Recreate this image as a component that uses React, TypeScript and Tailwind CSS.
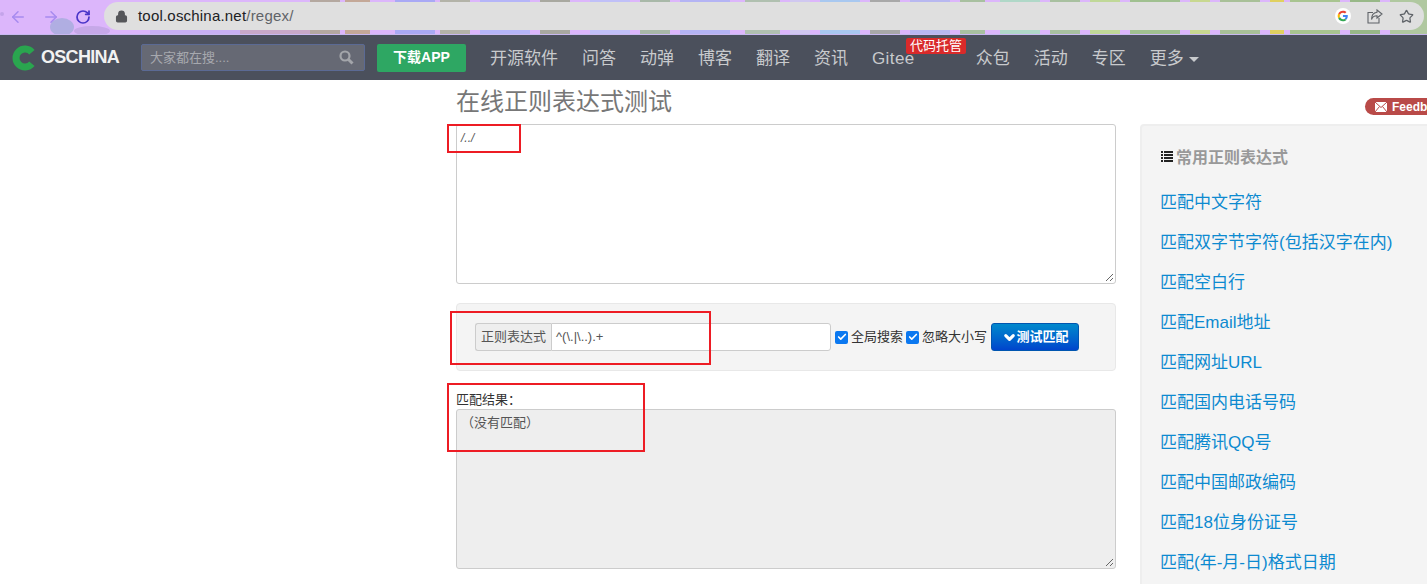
import { ChevronDown, Check, ArrowLeft, ArrowRight, RotateCw, Lock, Star } from "lucide-react";

const font = "font-['Liberation_Sans','Noto_Sans_CJK_SC',sans-serif]";

const navItems = ["开源软件", "问答", "动弹", "博客", "翻译", "资讯"];
const navItems2 = ["众包", "活动", "专区"];
const links = [
  "匹配中文字符",
  "匹配双字节字符(包括汉字在内)",
  "匹配空白行",
  "匹配Email地址",
  "匹配网址URL",
  "匹配国内电话号码",
  "匹配腾讯QQ号",
  "匹配中国邮政编码",
  "匹配18位身份证号",
  "匹配(年-月-日)格式日期",
];

const patches: [number, number, string][] = [
  [310, 30, "#b4a8a0"], [345, 25, "#c4a898"], [395, 40, "#a9a9f5"], [440, 30, "#b3b3a8"], [480, 50, "#b5b5f8"],
  [540, 30, "#a8a8a0"], [590, 40, "#c0c0f8"], [640, 30, "#a8b8a8"], [680, 50, "#b4b4f4"], [745, 35, "#b0c0b0"],
  [790, 20, "#d0c8f0"], [820, 40, "#a8c8f0"], [870, 30, "#a8a8a8"], [910, 40, "#b8b8f0"], [960, 25, "#a8c0a0"],
  [1000, 40, "#b0d8c8"], [1050, 30, "#a8c0a0"], [1090, 30, "#c0d898"], [1130, 50, "#a0c090"], [1190, 20, "#c8d890"],
  [1220, 40, "#a8c098"], [1270, 14, "#e0d060"], [1290, 50, "#a8c490"], [1350, 30, "#98b888"], [1390, 37, "#b0c8a0"],
];

function Wallpaper() {
  return (
    <svg className="absolute inset-0 w-full h-full" viewBox="0 0 1427 34" preserveAspectRatio="none">
      <rect width="1427" height="34" fill="#dcb6fb" />
      <ellipse cx="62" cy="27" rx="12" ry="9" fill="#b0aee2" />
      <ellipse cx="92" cy="31" rx="18" ry="5" fill="#c6a8e8" />
      <circle cx="2" cy="14" r="2" fill="#c4a4ea" />
      <rect x="150" y="30" width="90" height="4" fill="#c8b0f4" />
      <rect x="240" y="30" width="70" height="4" fill="#c8a8c8" />
      {patches.map(([x, w, c]) => (
        <rect key={x} x={x} y="0" width={w} height="34" fill={c} />
      ))}
    </svg>
  );
}

function BrowserBar() {
  return (
    <div className="relative h-[35px] flex items-center pl-[9px] pr-[3px] border-b border-[#c8b8f0]">
      <Wallpaper />
      <div className="relative flex items-center gap-[15px] w-[95px]">
        <ArrowLeft size={18} strokeWidth={2} className="text-[#a78bef]" />
        <ArrowRight size={18} strokeWidth={2} className="text-[#a78bef]" />
        <RotateCw size={16} strokeWidth={2.6} className="text-[#4a35c8]" />
      </div>
      <div className="relative flex-1 h-[28px] -mt-[2px] rounded-full bg-[#dfdfdf] flex items-center pl-[11px] pr-[10px]">
        <Lock size={13} strokeWidth={2.5} className="text-[#55565a]" fill="#55565a" />
        <span className="ml-[10px] text-[15px] tracking-[0.2px] text-[#202124]">
          tool.oschina.net<span className="text-[#5f6368]">/regex/</span>
        </span>
        <div className="flex-1" />
        <svg width="16" height="16" viewBox="0 0 48 48" className="mr-[16px]">
          <circle cx="24" cy="24" r="24" fill="#fff" />
          <g transform="translate(8 8) scale(0.66)">
            <path fill="#EA4335" d="M24 9.500c3.500 0 6.700 1.200 9.200 3.600l6.900-6.900C35.900 2.400 30.500 0 24 0 14.600 0 6.500 5.400 2.600 13.300l8 6.200C12.400 13.700 17.700 9.500 24 9.500z" />
            <path fill="#4285F4" d="M46.100 24.500c0-1.600-.1-3.100-.4-4.500H24v9h12.400c-.5 2.900-2.200 5.300-4.600 7l7.200 5.600c4.300-3.900 7.100-9.800 7.100-17.100z" />
            <path fill="#FBBC05" d="M10.500 28.700C10 27.200 9.800 25.600 9.800 24s.3-3.200.7-4.700l-8-6.200C.9 16.400 0 20.100 0 24s.9 7.600 2.600 10.900l7.900-6.200z" />
            <path fill="#34A853" d="M24 48c6.500 0 11.900-2.100 15.900-5.800l-7.200-5.600c-2.200 1.500-5 2.300-8.700 2.300-6.300 0-11.600-4.200-13.500-9.900l-8 6.200C6.500 42.600 14.600 48 24 48z" />
          </g>
        </svg>
        <svg width="16" height="15" viewBox="0 0 16 15" fill="none" stroke="#5f6368" strokeWidth="1.100" className="mr-[16px]">
          <path d="M6 3.500H1v10.500h11v-5" />
          <path d="M10 1l5 4-5 4V6.700C7 6.700 5.300 8 4.500 10.500 4.500 6.500 6.500 3.800 10 3.300z" />
        </svg>
        <Star size={15} strokeWidth={2} className="text-[#5f6368]" />
      </div>
    </div>
  );
}

function Nav() {
  return (
    <nav className="h-[45px] bg-[#4b505c] flex items-center">
      <svg width="26" height="26" viewBox="0 0 26 26" className="ml-[12px]">
        <path d="M19.900 7.200A9 9 0 1 0 19.900 18.800" fill="none" stroke="#2aa54f" strokeWidth="7" />
      </svg>
      <span className="ml-[3px] text-[18px] font-bold text-[#f2f2f2] tracking-[-0.7px] w-[80px]">OSCHINA</span>
      <div className="ml-[20px] w-[224px] h-[27px] rounded-[2px] bg-[#666974] border border-[#5b6a94] flex items-center pl-[8px] pr-[10px]">
        <span className="text-[13px] text-[#a6a8ae] flex-1">大家都在搜....</span>
        <svg width="15" height="15" viewBox="0 0 15 15" fill="none" stroke="#a3a5aa">
          <circle cx="6" cy="6" r="4.500" strokeWidth="2.200" />
          <path d="M9.500 9.500 L13.500 13.500" strokeWidth="3" />
        </svg>
      </div>
      <div className="ml-[12px] w-[89px] h-[28px] rounded-[2px] bg-[#2ea763] text-white text-[14px] font-bold flex items-center justify-center">
        下载APP
      </div>
      <div className="ml-[24px] mt-[2px] flex items-center gap-[24px] text-[17px] text-[#c8cacd]">
        {navItems.map((n) => (
          <span key={n}>{n}</span>
        ))}
        <span className="relative mr-[37px] tracking-[0.4px]">
          Gitee
          <span className="absolute left-[34px] -top-[8px] w-[60px] h-[16px] leading-[16px] text-center rounded-[2px] bg-[#d92a2a] text-white text-[13px] tracking-normal whitespace-nowrap">
            代码托管
          </span>
        </span>
        {navItems2.map((n) => (
          <span key={n}>{n}</span>
        ))}
        <span className="flex items-center gap-[5px]">
          更多
          <span className="w-0 h-0 border-x-[5px] border-x-transparent border-t-[5px] border-t-[#c8cacd] mt-[2px]" />
        </span>
      </div>
    </nav>
  );
}

function CheckBox() {
  return (
    <span className="w-[13px] h-[13px] rounded-[2px] bg-[#0b78f0] flex items-center justify-center">
      <Check size={10} strokeWidth={4} className="text-white" />
    </span>
  );
}

function Main() {
  return (
    <div className="w-[660px] shrink-0">
      <h1 className="h-[44px] leading-[44px] text-[24px] text-[#777]">在线正则表达式测试</h1>
      <div className="relative h-[160px] border border-[#ccc] rounded-[3px] bg-white pl-[4px] pt-[4px] text-[12px] text-[#555] italic">
        /../
        <svg width="10" height="10" viewBox="0 0 10 10" className="absolute right-[1px] bottom-[1px]">
          <path d="M9 2 L2 9 M9 6 L6 9" stroke="#666" strokeWidth="1" />
        </svg>
      </div>
      <div className="mt-[19px] h-[68px] border border-[#e8e8e8] rounded-[4px] bg-[#f4f4f4] flex items-center pl-[18px]">
        <div className="flex h-[28px] w-[356px]">
          <span className="w-[76px] flex items-center justify-center border border-[#ccc] border-r-0 rounded-l-[3px] bg-[#eee] text-[13px] text-[#555]">
            正则表达式
          </span>
          <span className="flex-1 flex items-center border border-[#ccc] rounded-r-[3px] bg-white pl-[4px] text-[13px] text-[#555]">
            ^(\.|\..).+
          </span>
        </div>
        <div className="ml-[4px]"><CheckBox /></div>
        <span className="ml-[3px] text-[13px] text-[#333]">全局搜索</span>
        <div className="ml-[3px]"><CheckBox /></div>
        <span className="ml-[3px] text-[13px] text-[#333]">忽略大小写</span>
        <button className="ml-[4px] w-[88px] h-[28px] rounded-[3px] border border-[#0055b0] bg-gradient-to-b from-[#0088cc] to-[#0044cc] text-white text-[13px] font-bold flex items-center justify-center">
          <ChevronDown size={15} strokeWidth={5} />
          测试匹配
        </button>
      </div>
      <div className="mt-[20px] h-[18px] leading-[18px] text-[13px] text-[#333]">匹配结果：</div>
      <div className="relative h-[160px] border border-[#ccc] rounded-[3px] bg-[#eee] pl-[4px] pt-[3px] text-[13px] text-[#555]">
        （没有匹配）
        <svg width="10" height="10" viewBox="0 0 10 10" className="absolute right-[1px] bottom-[1px]">
          <path d="M9 2 L2 9 M9 6 L6 9" stroke="#666" strokeWidth="1" />
        </svg>
      </div>
    </div>
  );
}

function Sidebar() {
  return (
    <aside className="ml-[24px] mt-[44px] w-[300px] shrink-0 h-[520px] border-2 border-[#eee] rounded-[4px] bg-[#f4f4f4] pl-[18px] pt-[20px]">
      <div className="flex items-center h-[24px] text-[16px] font-bold text-[#999]">
        <svg width="12" height="11" viewBox="0 0 12 11" fill="#222" className="ml-[1px] mr-[3px] -mt-[4px]">
          <path d="M0 0h2v2H0zM3 0h9v2H3zM0 3h2v2H0zM3 3h9v2H3zM0 6h2v2H0zM3 6h9v2H3zM0 9h2v2H0zM3 9h9v2H3z" />
        </svg>
        常用正则表达式
      </div>
      <ul className="mt-[13px]">
        {links.map((l) => (
          <li key={l} className="h-[40px] leading-[40px] text-[17px] text-[#0d8ad0] whitespace-nowrap">
            {l}
          </li>
        ))}
      </ul>
    </aside>
  );
}

export default function App() {
  return (
    <div className={`relative w-[1427px] h-[584px] overflow-hidden bg-white ${font}`}>
      <BrowserBar />
      <Nav />
      <div className="flex pl-[456px]">
        <Main />
        <Sidebar />
      </div>
      {/* feedback tab */}
      <div className="absolute left-[1365px] top-[98px] w-[100px] h-[17px] rounded-l-full bg-[#b94a48] text-white text-[12px] font-bold flex items-center pl-[10px] gap-[5px] whitespace-nowrap">
        <svg width="12" height="10" viewBox="0 0 12 10" className="shrink-0">
          <rect width="12" height="10" fill="#fff" />
          <path d="M0 0 L6 5.500 L12 0 M0 10 L4.500 4.500 M12 10 L7.500 4.500" fill="none" stroke="#b94a48" strokeWidth="1" />
        </svg>
        Feedback
      </div>
      {/* red annotation boxes */}
      <div className="absolute left-[447px] top-[124px] w-[74px] h-[29px] border-2 border-[#ed1c24]" />
      <div className="absolute left-[450px] top-[311px] w-[261px] h-[54px] border-2 border-[#ed1c24]" />
      <div className="absolute left-[447px] top-[383px] w-[198px] h-[69px] border-2 border-[#ed1c24]" />
    </div>
  );
}
